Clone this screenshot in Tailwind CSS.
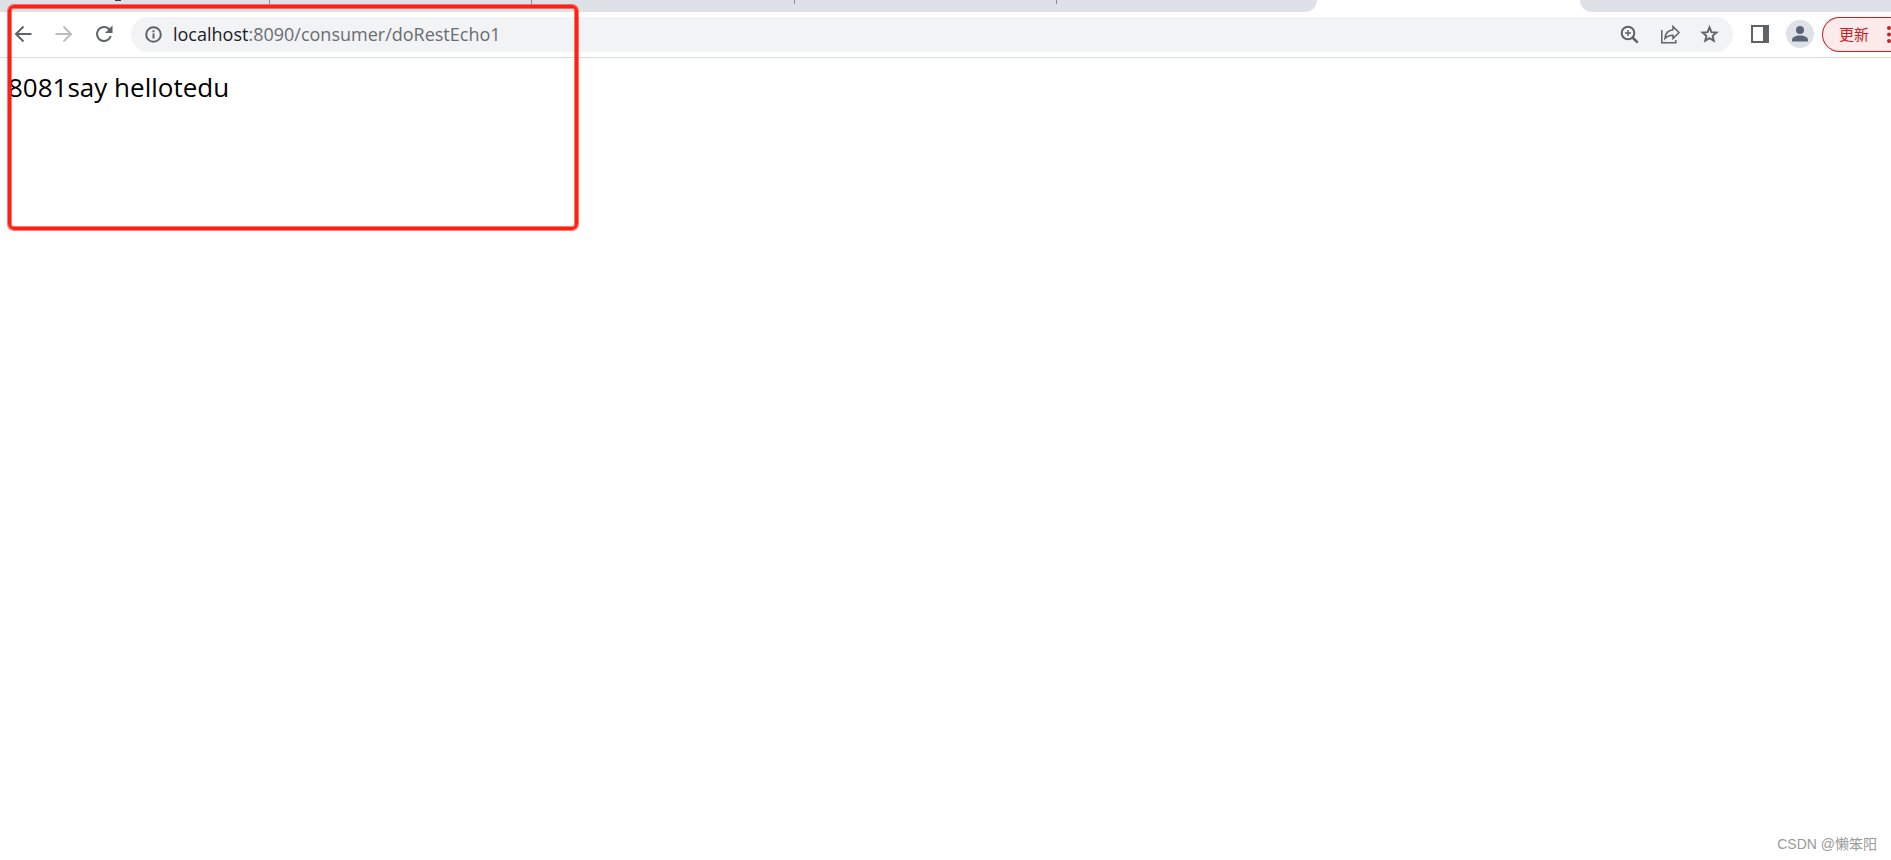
<!DOCTYPE html>
<html lang="zh-CN">
  <head>
    <meta charset="UTF-8" />
    <meta name="viewport" content="width=device-width, initial-scale=1.0" />
    <title>localhost:8090/consumer/doRestEcho1</title>
    <script src="https://cdn.jsdelivr.net/npm/@tailwindcss/browser@4"></script>
  </head>

  <body class="relative min-h-screen overflow-x-hidden bg-white font-['Open_Sans','Noto_Sans_CJK_SC',sans-serif]">

    <!-- Tab strip -->
    <div class="flex h-3 bg-white">
      <div class="flex flex-1 rounded-br-xl bg-[#dee1e6]">
        <div class="flex h-1 w-[270px] justify-between border-r border-[#8a8d91]">
          <span class="ml-[115px] h-px w-1.5 bg-[#3c4043]"></span>
        </div>
        <div class="h-1 w-[262px] border-r border-[#8a8d91]"></div>
        <div class="h-1 w-[263px] border-r border-[#8a8d91]"></div>
        <div class="h-1 w-[262px] border-r border-[#8a8d91]"></div>
      </div>
      <div class="w-[263px]"></div>
      <div class="w-[311px] rounded-bl-xl bg-[#dee1e6]"></div>
    </div>

    <!-- Toolbar -->
    <div class="flex h-[46px] items-center border-b border-[#d9dadb] pl-3 text-[#5f6368]">
      <div class="flex gap-4 pb-0.5">
        <button type="button" aria-label="Back">
          <svg class="size-6" viewBox="0 0 24 24" fill="none" stroke="currentColor" stroke-width="2"><path d="M19.500 12H5M11.500 4.500L4 12l7.500 7.500" /></svg>
        </button>
        <button type="button" aria-label="Forward" class="text-[#babcbe]">
          <svg class="size-6" viewBox="0 0 24 24" fill="none" stroke="currentColor" stroke-width="2"><path d="M3.500 12H18M11.500 4.500L19 12l-7.500 7.500" /></svg>
        </button>
        <button type="button" aria-label="Reload">
          <svg class="size-6" viewBox="0 0 24 24" fill="currentColor"><path d="M17.650 6.350A7.960 7.960 0 0 0 12 4a8 8 0 1 0 7.730 10h-2.080A6 6 0 1 1 12 6c1.660 0 3.140.69 4.220 1.780L13 11h7.500V3.500z" /></svg>
        </button>
      </div>

      <!-- Address bar -->
      <div class="ml-[15px] flex h-[35px] flex-1 items-center rounded-full bg-[#f1f3f4] pr-3 pb-0.5 pl-3">
        <svg class="size-5" viewBox="0 0 20 20" fill="none" stroke="currentColor" stroke-width="2"><circle cx="10.500" cy="10.500" r="7.300" /><path d="M10.500 9.500v5M10.500 6.200v2" /></svg>
        <a href="#" class="ml-2.5 flex-1 text-lg leading-6 text-[#6a6d71]"><span class="text-[#202124]">localhost</span>:8090/consumer/doRestEcho1</a>
        <div class="flex gap-4">
          <button type="button" aria-label="Zoom">
            <svg class="size-6" viewBox="0 0 24 24" fill="none" stroke="currentColor" stroke-width="2"><circle cx="11" cy="11" r="6.300" /><path d="M15.500 15.500l5.200 5.200" stroke-width="2.500" /><path d="M11 8v6M8 11h6" stroke-width="1.500" /></svg>
          </button>
          <button type="button" aria-label="Share">
            <svg class="size-6" viewBox="0 0 24 24" fill="none" stroke="currentColor" stroke-width="1.500"><path d="M4.800 8v12.700h14V18" /><path d="M16 4.500l6 6-6 6v-3.300c-3.500 0-6 .8-8 3.300.3-5 3.500-8.200 8-8.700z" /></svg>
          </button>
          <button type="button" aria-label="Bookmark">
            <svg class="size-6" viewBox="0 0 24 24" fill="none" stroke="currentColor" stroke-width="1.900"><path d="M12.500 5.300l1.900 4.800 5.100.4-3.900 3.300 1.200 5-4.300-2.700-4.300 2.700 1.200-5-3.900-3.300 5.100-.4z" /></svg>
          </button>
        </div>
      </div>

      <button type="button" aria-label="Side panel" class="ml-[18px] pb-px">
        <svg class="h-[18px] w-[18px]" viewBox="0 0 18 18" fill="currentColor"><path fill-rule="evenodd" d="M0 0h18v18H0zM2 2v14h10V2z" /></svg>
      </button>
      <button type="button" aria-label="Profile" class="ml-[17px] pb-px">
        <svg class="size-7" viewBox="0 0 28 28"><circle cx="14" cy="14" r="14" fill="#dee1e6" /><g fill="#5a6475"><circle cx="14" cy="10" r="4" /><path d="M6 21.500v-1.500c0-3 4-4.500 8-4.500s8 1.500 8 4.500v1.500z" /></g></svg>
      </button>
      <button type="button" class="ml-2 flex h-[35px] w-[69px] items-center justify-between rounded-l-full border border-r-0 border-[#c5221f] bg-[#fcebea] pb-0.5 pl-4 text-[#c5221f]">
        <span class="text-[15px] leading-5 whitespace-nowrap">更新</span>
        <svg class="h-5 w-[5px]" viewBox="0 0 5 20" fill="currentColor"><circle cx="3" cy="4" r="2" /><circle cx="3" cy="10.500" r="2" /><circle cx="3" cy="17" r="2" /></svg>
      </button>
    </div>

    <!-- Page content -->
    <main class="px-2 pt-[11px]">
      <pre class="font-['Open_Sans',sans-serif] text-[26px] leading-9 text-black">8081say hellotedu</pre>
    </main>

    <!-- Highlight frame -->
    <div class="pointer-events-none absolute top-[5px] left-2 h-[225px] w-[570px] rounded-md border-[3px] border-[#ff2012] ring-1 ring-[#ff2012]/60 inset-ring-1 inset-ring-[#ff2012]/60"></div>

    <!-- Watermark -->
    <div class="absolute right-[14px] bottom-1.5 font-['Liberation_Sans','Noto_Sans_CJK_SC',sans-serif] text-sm leading-5 text-[#999999]">CSDN @懒笨阳</div>

  </body>
</html>
